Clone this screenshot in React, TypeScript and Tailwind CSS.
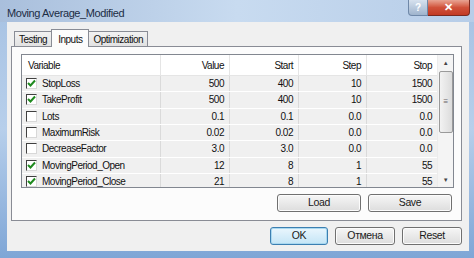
const rows = [
  { name: 'StopLoss', checked: true, value: '500', start: '400', step: '10', stop: '1500' },
  { name: 'TakeProfit', checked: true, value: '500', start: '400', step: '10', stop: '1500' },
  { name: 'Lots', checked: false, value: '0.1', start: '0.1', step: '0.0', stop: '0.0' },
  { name: 'MaximumRisk', checked: false, value: '0.02', start: '0.02', step: '0.0', stop: '0.0' },
  { name: 'DecreaseFactor', checked: false, value: '3.0', start: '3.0', step: '0.0', stop: '0.0' },
  { name: 'MovingPeriod_Open', checked: true, value: '12', start: '8', step: '1', stop: '55' },
  { name: 'MovingPeriod_Close', checked: true, value: '21', start: '8', step: '1', stop: '55' },
]

function CheckBox({ checked }: { checked: boolean }) {
  return (
    <span className="w-[11px] h-[11px] shrink-0 border-t border-l border-t-[#404040] border-l-[#404040] border-b border-r border-b-[#d8d8d8] border-r-[#d8d8d8] bg-white flex items-center justify-center">
      {checked && (
        <svg width="9" height="9" viewBox="0 0 9 9">
          <path d="M1 4 L3.5 6.5 L8 1.5" stroke="#1f8a1f" strokeWidth="2" fill="none" />
        </svg>
      )}
    </span>
  )
}

function Btn({ label, w, focus }: { label: string; w: string; focus?: boolean }) {
  return (
    <button
      className={`${w} h-[18px] rounded-[3px] border text-[10.5px] tracking-[-0.4px] text-[#1a1a1a] flex items-center justify-center ${
        focus
          ? 'border-[#3c7fb1] bg-gradient-to-b from-[#eaf6fd] to-[#c4e5f6] shadow-[inset_0_0_0_1px_#a9d8f0]'
          : 'border-[#707070] bg-gradient-to-b from-[#f6f6f6] to-[#dddddd] shadow-[inset_0_0_0_1px_#fcfcfc]'
      }`}
    >
      {label}
    </button>
  )
}

export default function App() {
  return (
    <div
      className="w-[474px] h-[258px] overflow-hidden flex flex-col bg-gradient-to-b from-[#a7c2e3] via-[#b7cfeb] to-[#7fa6d6]"
      style={{ fontFamily: '"Liberation Sans", Arial, sans-serif' }}
    >
      {/* title bar */}
      <div className="h-[22px] shrink-0 flex items-start bg-gradient-to-r from-[#a9bfdc] via-[#c8dbf0] to-[#b7cde8]">
        <div className="pl-[7px] pt-[5px] text-[11px] tracking-[-0.4px] text-[#1c2c44]">Moving Average_Modified</div>
        <div className="ml-auto mr-[4px] flex">
          <div className="w-[20px] h-[16px] rounded-bl-[4px] border border-[#6f88a8] border-t-0 bg-gradient-to-b from-[#d6e1ee] to-[#9fb4cd] text-white text-[10px] font-bold flex items-center justify-center">?</div>
          <div className="w-[42px] h-[16px] rounded-br-[4px] border border-[#7a2a20] border-t-0 border-l-0 bg-gradient-to-b from-[#e8a493] via-[#d0513a] to-[#c23a24] text-white text-[11px] font-bold flex items-center justify-center">✕</div>
        </div>
      </div>

      {/* client area */}
      <div className="ml-[7px] mr-[5px] h-[229px] bg-[#f0f0f0] flex flex-col text-[10px] tracking-[-0.5px] text-[#111]">
        {/* tabs */}
        <div className="flex items-end pl-[7px] pt-[7px] h-[24px] relative z-10">
          <div className="h-[15px] px-[4px] border border-[#898c95] border-b-0 bg-gradient-to-b from-[#f2f2f2] to-[#e2e2e2] flex items-center">Testing</div>
          <div className="h-[18px] -mb-px px-[6px] border border-[#898c95] border-b-0 bg-[#fcfcfc] flex items-start pt-[2px] -mx-[1px]">Inputs</div>
          <div className="h-[15px] px-[4px] border border-[#898c95] border-b-0 bg-gradient-to-b from-[#f2f2f2] to-[#e2e2e2] flex items-center">Optimization</div>
        </div>

        {/* tab panel */}
        <div className="ml-[4px] w-[451px] h-[175px] border border-[#898c95] bg-[#fcfcfc] flex flex-col pl-[9px] pr-[7px] pt-[7px]">
          <div className="h-[134px] border border-[#828790] bg-white flex overflow-hidden">
            <div className="flex-1 flex flex-col">
              <div className="h-[21px] shrink-0 flex border-b border-[#e5e5e5]">
                <div className="w-[139px] pl-[6px] flex items-center border-r border-[#e5e5e5]">Variable</div>
                <div className="w-[69px] pr-[5px] flex items-center justify-end border-r border-[#e5e5e5]">Value</div>
                <div className="w-[69px] pr-[5px] flex items-center justify-end border-r border-[#e5e5e5]">Start</div>
                <div className="w-[68px] pr-[5px] flex items-center justify-end border-r border-[#e5e5e5]">Step</div>
                <div className="flex-1 pr-[5px] flex items-center justify-end">Stop</div>
              </div>
              {rows.map((r) => (
                <div key={r.name} className="h-[16.33px] shrink-0 flex bg-[#f0f0f0] border-b border-white">
                  <div className="w-[139px] pl-[4px] flex items-center gap-[5px] border-r border-[#dadada]">
                    <CheckBox checked={r.checked} />
                    <span>{r.name}</span>
                  </div>
                  <div className="w-[69px] pr-[5px] flex items-center justify-end border-r border-[#dadada]">{r.value}</div>
                  <div className="w-[69px] pr-[5px] flex items-center justify-end border-r border-[#dadada]">{r.start}</div>
                  <div className="w-[68px] pr-[5px] flex items-center justify-end border-r border-[#dadada]">{r.step}</div>
                  <div className="flex-1 pr-[5px] flex items-center justify-end">{r.stop}</div>
                </div>
              ))}
            </div>
            {/* scrollbar */}
            <div className="w-[16px] shrink-0 bg-[#f4f4f4] border-l border-[#ececec] flex flex-col items-center">
              <div className="h-[16px] flex items-center justify-center text-[6px] text-[#444]">▲</div>
              <div className="w-[14px] h-[62px] rounded-[2px] border border-[#9a9a9a] bg-gradient-to-r from-[#f2f2f2] to-[#dcdcdc] flex items-center justify-center">
                <span className="text-[8px] leading-none text-[#666]">≡</span>
              </div>
              <div className="flex-1" />
              <div className="h-[14px] flex items-center justify-center text-[6px] text-[#444]">▼</div>
            </div>
          </div>
          <div className="flex justify-end gap-[7px] mt-[6px] pr-[2px]">
            <Btn label="Load" w="w-[84px]" />
            <Btn label="Save" w="w-[84px]" />
          </div>
        </div>

        {/* dialog buttons */}
        <div className="flex justify-end gap-[7px] mt-[6px] pr-[7px]">
          <Btn label="OK" w="w-[58px]" focus />
          <Btn label="Отмена" w="w-[60px]" />
          <Btn label="Reset" w="w-[60px]" />
        </div>
      </div>
    </div>
  )
}
